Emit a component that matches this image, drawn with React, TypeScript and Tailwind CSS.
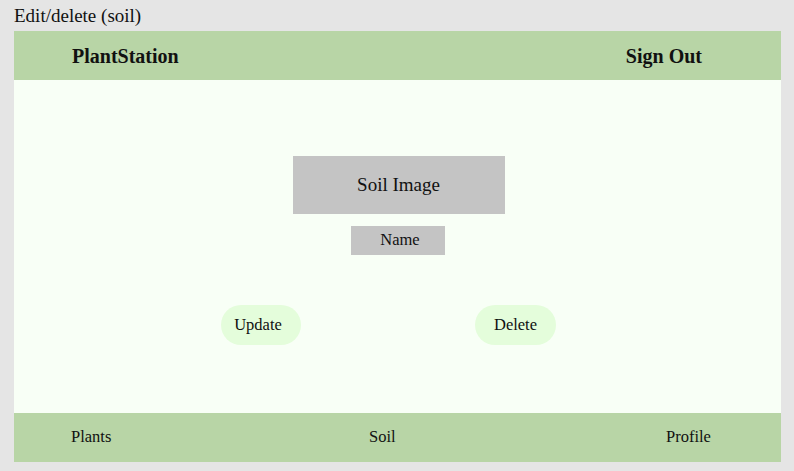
import React from 'react';

const serif = { fontFamily: '"Liberation Serif", "DejaVu Serif", serif' };

const App: React.FC = () => {
  return (
    <div className="w-[794px] h-[471px] bg-[#e5e5e5] text-[#111] overflow-hidden" style={serif}>
      <div className="pl-[14px] pt-[5px] h-[31px] text-[19px] leading-[22px]">Edit/delete (soil)</div>

      <div className="ml-[14px] w-[767px] h-[431px] flex flex-col">
        {/* header */}
        <div className="h-[49px] bg-[#b8d5a6] flex items-center justify-between pl-[58px] pr-[79px]">
          <span className="text-[20px] font-bold">PlantStation</span>
          <span className="text-[20px] font-bold">Sign Out</span>
        </div>

        {/* content */}
        <div className="flex-1 bg-[#f8fff6] flex flex-col items-center pt-[76px]">
          <div className="w-[212px] h-[58px] bg-[#c4c4c4] flex items-center justify-center text-[19px] ml-[2px]">
            Soil Image
          </div>
          <div className="mt-[12px] w-[94px] h-[29px] bg-[#c4c4c4] flex items-center justify-center pl-[5px] text-[16.5px]">
            Name
          </div>
          <div className="self-stretch flex pl-[207px] gap-[174px] mt-[50px]">
            <button className="w-[80px] h-[40px] rounded-full bg-[#e4fddb] text-[16.5px] pr-[6px]">Update</button>
            <button className="w-[81px] h-[40px] rounded-full bg-[#e4fddb] text-[16.5px]">Delete</button>
          </div>
        </div>

        {/* footer */}
        <div className="h-[49px] bg-[#b8d5a6] flex items-center pl-[57px] text-[16.5px]">
          <span className="w-[298px]">Plants</span>
          <span className="w-[297px]">Soil</span>
          <span>Profile</span>
        </div>
      </div>
    </div>
  );
};

export default App;
